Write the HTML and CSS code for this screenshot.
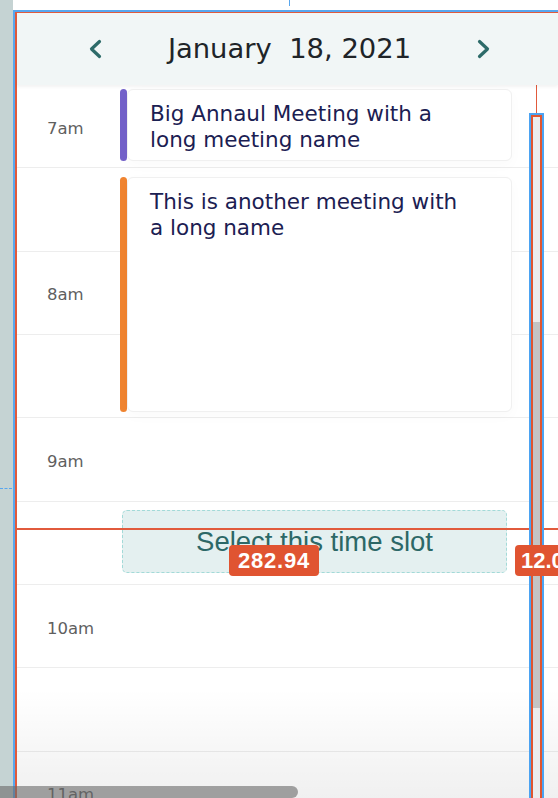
FILE: index.html
```html
<!DOCTYPE html>
<html lang="en">
<head>
    <meta charset="UTF-8">
    <meta name="viewport" content="width=device-width, initial-scale=1.0">
    <title>Day view</title>
    <link rel="stylesheet" href="styles.css">
</head>
<body>
    <div class="app">
        <div class="gutter"></div>

        <div class="canvas">
            <div class="header">
                <div class="header-inner">
                    <button class="nav-btn" aria-label="Previous day">
                        <svg width="14" height="20" viewBox="0 0 14 20"><path d="M11.5 2.5 L3.5 10 L11.5 17.5" fill="none" stroke="#2d6b69" stroke-width="3.2" stroke-linecap="round" stroke-linejoin="round"/></svg>
                    </button>
                    <h1 class="title">January&nbsp; 18, 2021</h1>
                    <button class="nav-btn" aria-label="Next day">
                        <svg width="14" height="20" viewBox="0 0 14 20"><path d="M2.5 2.5 L10.5 10 L2.5 17.5" fill="none" stroke="#2d6b69" stroke-width="3.2" stroke-linecap="round" stroke-linejoin="round"/></svg>
                    </button>
                </div>
            </div>

            <div class="grid">
                <div class="slot"><span class="hour">7am</span></div>
                <div class="slot"></div>
                <div class="slot"><span class="hour">8am</span></div>
                <div class="slot"></div>
                <div class="slot"><span class="hour">9am</span></div>
                <div class="slot"></div>
                <div class="slot"><span class="hour">10am</span></div>
                <div class="slot"></div>
                <div class="slot"><span class="hour">11am</span></div>

                <!-- events sit at their time -->
                <div class="event event-purple" style="top: 4px; height: 72px;">
                    <div class="event-bar"></div>
                    <div class="event-card">Big Annaul Meeting with a long meeting name</div>
                </div>
                <div class="event event-orange" style="top: 92px; height: 235px;">
                    <div class="event-bar"></div>
                    <div class="event-card">This is another meeting with a long name</div>
                </div>

                <div class="select-slot" style="top: 425px;">Select this time slot</div>

                <div class="fade"></div>
            </div>
        </div>
    </div>

    <!-- inspector overlay -->
    <div class="guide guide-blue guide-h" style="top: 10px; left: 13px;"></div>
    <div class="guide guide-blue guide-v" style="top: 10px; left: 13px;"></div>
    <div class="guide guide-red guide-h" style="top: 11.5px; left: 15px;"></div>
    <div class="guide guide-red guide-v" style="top: 11.5px; left: 15px;"></div>
    <div class="guide guide-red guide-v guide-short" style="top: 11.5px; left: 535.8px;"></div>
    <div class="guide guide-red guide-h guide-thick" style="top: 528px; left: 15px;"></div>
    <div class="tick tick-top"></div>
    <div class="tick tick-left"></div>

    <div class="vscroll">
        <div class="vscroll-inner">
            <div class="vscroll-thumb"></div>
        </div>
    </div>

    <div class="badge badge-corner"></div>
    <div class="badge badge-width">282.94</div>
    <div class="badge badge-gap">12.0</div>

    <div class="hscroll"></div>
</body>
</html>
```

FILE: styles.css
```css
body {
    margin: 0;
    width: 558px;
    height: 798px;
    overflow: hidden;
    position: relative;
    background: #fff;
    font-family: "DejaVu Sans", "Noto Sans", sans-serif;
}
.app {
    display: flex;
    height: 798px;
}
.gutter {
    width: 13px;
    background: #c5d3d3;
}
.canvas {
    flex: 1;
    padding: 13px 0 0 4px;
    display: flex;
    flex-direction: column;
}
.header {
    height: 72px;
    background: #f1f6f6;
    padding-left: 71px;
    display: flex;
    align-items: center;
    box-shadow: 0 2px 3px rgba(0, 0, 0, 0.05);
    position: relative;
    z-index: 1;
}
.header-inner {
    width: 403px;
    display: flex;
    justify-content: space-between;
    align-items: center;
}
.nav-btn {
    border: none;
    background: none;
    padding: 0;
    width: 14px;
    height: 20px;
    display: flex;
}
.title {
    margin: 0 0 2px;
    font-size: 27.4px;
    font-weight: normal;
    color: #202428;
}
.grid {
    position: relative;
    flex: 1;
    overflow: hidden;
}
.slot {
    height: 83.33px;
    box-sizing: border-box;
    border-bottom: 1.5px solid #ededed;
    display: flex;
    align-items: center;
    padding: 4px 0 0 30px;
}
.hour {
    font-size: 16.5px;
    color: #5f5f5f;
}
.event {
    position: absolute;
    left: 103px;
    width: 392px;
    display: flex;
}
.event-bar {
    width: 7px;
    border-radius: 4px;
}
.event-purple .event-bar {
    background: #7361c9;
}
.event-orange .event-bar {
    background: #f08430;
}
.event-card {
    flex: 1;
    background: #fff;
    border: 1px solid #f0f0f0;
    border-radius: 6px;
    padding: 11px 41px 0 22px;
    font-size: 21.5px;
    line-height: 26px;
    color: #1b2052;
    box-shadow: 0 4px 14px rgba(0, 0, 0, 0.025);
}
.select-slot {
    position: absolute;
    left: 105px;
    width: 385px;
    height: 63px;
    box-sizing: border-box;
    border: 1.5px dashed #a3dad8;
    border-radius: 5px;
    background: #e4f0f0;
    display: flex;
    align-items: center;
    justify-content: center;
    font-family: "Liberation Sans", Arial, sans-serif;
    font-size: 27.5px;
    color: #2c6867;
}
.fade {
    position: absolute;
    left: 0;
    right: 0;
    bottom: 0;
    height: 110px;
    background: linear-gradient(rgba(0, 0, 0, 0), rgba(0, 0, 0, 0.06));
}

/* inspector overlay */
.guide {
    position: absolute;
}
.guide-h {
    right: 0;
    height: 1.5px;
}
.guide-v {
    bottom: 0;
    width: 1.5px;
}
.guide-short {
    bottom: auto;
    height: 106px;
}
.guide-thick {
    height: 2px;
}
.guide-blue {
    background: #58a6ee;
}
.guide-red {
    background: #e15a3c;
}
.tick {
    position: absolute;
    border: 0 dashed #58a6ee;
}
.tick-top {
    left: 289px;
    top: 0;
    height: 6px;
    border-left-width: 1.5px;
}
.tick-left {
    left: 0;
    top: 488px;
    width: 12px;
    border-top-width: 1.5px;
}
.vscroll {
    position: absolute;
    left: 529px;
    top: 113px;
    bottom: 0;
    width: 15px;
    box-sizing: border-box;
    border: 2.5px solid #4ba3f2;
    border-bottom: none;
}
.vscroll-inner {
    height: 100%;
    box-sizing: border-box;
    border: 2.5px solid #e0552f;
    border-bottom: none;
    background: #ececec;
    position: relative;
}
.vscroll-thumb {
    position: absolute;
    left: 0;
    right: 0;
    top: 205px;
    height: 386px;
    background: #c4c4c4;
}
.badge {
    position: absolute;
    background: #e05431;
    color: #fff;
    border-radius: 4px;
    font-family: "Liberation Sans", Arial, sans-serif;
    font-weight: bold;
    font-size: 22px;
    letter-spacing: 0.8px;
    line-height: 31px;
    height: 31px;
}
.badge-corner {
    left: 549px;
    top: 44px;
    width: 30px;
    height: 33px;
    border-radius: 5px;
}
.badge-width {
    left: 229px;
    top: 545px;
    width: 90px;
    text-align: center;
}
.badge-gap {
    left: 515px;
    top: 545px;
    width: 60px;
    padding-left: 6px;
    letter-spacing: 0;
}
.hscroll {
    position: absolute;
    left: 0;
    bottom: 0;
    width: 298px;
    height: 12px;
    background: rgba(105, 105, 105, 0.6);
    border-radius: 0 6px 6px 0;
}
```
